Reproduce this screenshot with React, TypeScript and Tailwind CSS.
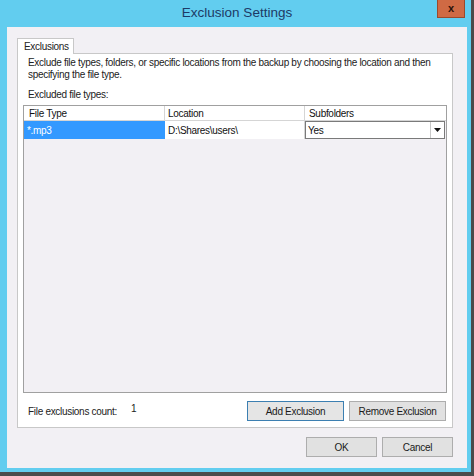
const font = { fontFamily: '"Liberation Sans", Arial, sans-serif' }

function Button({ label, focused = false, className = '' }: { label: string; focused?: boolean; className?: string }) {
  return (
    <button
      type="button"
      className={`flex h-[20px] items-center justify-center border text-[10px] text-[#1a1a1a] ${
        focused ? 'border-[#3c7fb1] bg-[#e5e5e5]' : 'border-[#adadad] bg-[#e1e1e1]'
      } ${className}`}
    >
      {label}
    </button>
  )
}

export default function App() {
  return (
    <div className="h-[476px] w-[474px] bg-[#4b4b4b] tracking-[-0.3px]" style={font}>
      <div className="flex h-[472px] w-[471px] flex-col bg-[#62cdef] pb-[4px] pl-[7px] pr-[4px]">
        {/* title bar */}
        <div className="relative flex h-[27px] shrink-0 items-center justify-center">
          <span className="text-[13.5px] tracking-normal text-[#1d3a66]">Exclusion Settings</span>
          <div className="absolute right-[2px] top-0 flex h-[18px] w-[28px] items-center justify-center border border-t-0 border-[#9a4a2c] bg-[#cf6a44]">
            <span className="text-[11px] font-bold leading-none text-[#2a1208]">x</span>
          </div>
        </div>

        {/* client area */}
        <div className="flex flex-1 flex-col bg-[#f2f0f4] pl-[10px] pr-[14px] pt-[11px]">
          <div className="relative z-10 -mb-px flex h-[16px] w-[57px] items-center border border-b-0 border-[#c8c8c8] bg-white pl-[6px] text-[10px] text-[#222]">
            Exclusions
          </div>
          <div className="flex h-[375px] flex-col border border-[#c8c8c8] bg-white px-[5px]">
            <p className="mt-[3px] pl-[5px] text-[10px] leading-[12px] text-[#222]">
              Exclude file types, folders, or specific locations from the backup by choosing the location and then
              specifying the file type.
            </p>
            <p className="mt-[8px] pl-[5px] text-[10px] leading-[12px] text-[#222]">Excluded file types:</p>

            {/* grid */}
            <div className="mt-[4px] flex h-[288px] flex-col border border-[#a0a0a0] bg-[#f2f0f4]">
              <div className="grid h-[15px] grid-cols-[141px_140px_1fr] border-b border-[#d5d5d5] bg-white text-[10px] text-[#111]">
                <div className="flex items-center border-r border-[#d5d5d5] pl-[5px]">File Type</div>
                <div className="flex items-center border-r border-[#d5d5d5] pl-[3px]">Location</div>
                <div className="flex items-center pl-[4px]">Subfolders</div>
              </div>
              <div className="grid h-[18px] grid-cols-[141px_140px_140px] text-[10px]">
                <div className="flex items-center bg-[#3399ff] pl-[3px] text-white">*.mp3</div>
                <div className="flex items-center border-r border-[#d5d5d5] bg-white pl-[3px] text-[#111]">
                  D:\Shares\users\
                </div>
                <div className="flex items-stretch border border-[#7a7a7a] bg-white">
                  <div className="flex flex-1 items-center pl-[2px] text-[#111]">Yes</div>
                  <div className="flex w-[14px] items-center justify-center border-l border-[#c8c8c8]">
                    <svg width="7" height="4" viewBox="0 0 7 4">
                      <path d="M0 0h7L3.5 4z" fill="#111" />
                    </svg>
                  </div>
                </div>
              </div>
            </div>

            <div className="mt-[8px] flex items-start">
              <span className="mt-[3px] pl-[5px] text-[10px] text-[#222]">File exclusions count:</span>
              <span className="ml-[14px] text-[10px] text-[#222]">1</span>
              <div className="ml-auto mr-[1px] flex gap-[5px]">
                <Button label="Add Exclusion" focused className="w-[97px]" />
                <Button label="Remove Exclusion" className="w-[97px]" />
              </div>
            </div>
          </div>

          <div className="mt-[9px] flex justify-end gap-[5px]">
            <Button label="OK" className="w-[71px]" />
            <Button label="Cancel" className="w-[71px]" />
          </div>
        </div>
      </div>
    </div>
  )
}
